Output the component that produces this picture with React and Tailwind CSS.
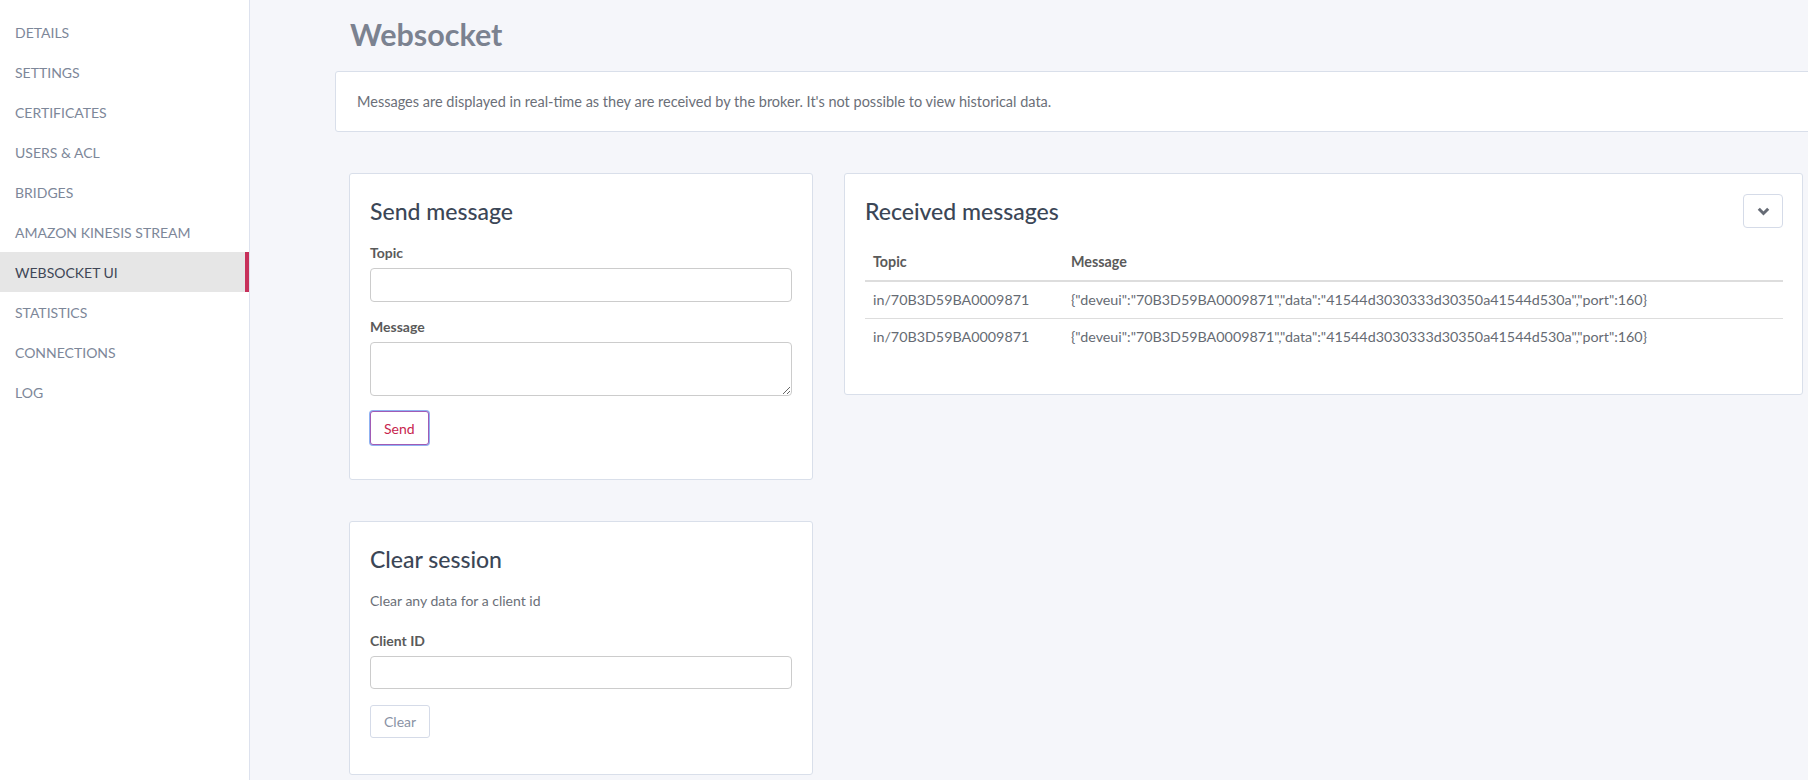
import { useState } from "react";

const NAV = [
  "Details",
  "Settings",
  "Certificates",
  "Users & ACL",
  "Bridges",
  "Amazon Kinesis Stream",
  "Websocket UI",
  "Statistics",
  "Connections",
  "Log",
];

const ROWS = [
  {
    topic: "in/70B3D59BA0009871",
    message: '{"deveui":"70B3D59BA0009871","data":"41544d3030333d30350a41544d530a","port":160}',
  },
  {
    topic: "in/70B3D59BA0009871",
    message: '{"deveui":"70B3D59BA0009871","data":"41544d3030333d30350a41544d530a","port":160}',
  },
];

function Sidebar({ active }) {
  return (
    <aside className="w-[250px] shrink-0 bg-white border-r border-[#dde2ee] pt-[12px]">
      {NAV.map((item) => {
        const isActive = item === active;
        return (
          <div
            key={item}
            className={
              isActive
                ? "h-[40px] flex items-center pl-[15px] uppercase text-[14px] bg-[#e6e6e6] text-[#404756] border-r-4 border-[#c7305a]"
                : "h-[40px] flex items-center pl-[15px] uppercase text-[14px] text-[#7d8799]"
            }
          >
            {item}
          </div>
        );
      })}
    </aside>
  );
}

function Card({ children, className = "" }) {
  return (
    <div className={"bg-white border border-[#d9dfea] rounded-[3px] px-[20px] pt-[24px] " + className}>
      {children}
    </div>
  );
}

function Label({ children }) {
  return <div className="text-[14px] leading-[20px] font-bold text-[#5a5a5a] mb-[5px]">{children}</div>;
}

function SendMessage() {
  const [topic, setTopic] = useState("");
  const [message, setMessage] = useState("");

  return (
    <Card className="pb-[34px]">
      <h3 className="text-[23px] leading-[26px] font-medium text-[#3b4656] mb-[19px]">Send message</h3>
      <Label>Topic</Label>
      <input
        value={topic}
        onChange={(e) => setTopic(e.target.value)}
        className="block w-full h-[34px] border border-[#cccccc] rounded-[4px] px-3 outline-none"
      />
      <div className="mt-[15px]">
        <Label>Message</Label>
        <textarea
          value={message}
          onChange={(e) => setMessage(e.target.value)}
          className="block w-full h-[54px] border border-[#cccccc] rounded-[4px] px-3 py-1 outline-none"
        />
      </div>
      <button className="mt-[15px] h-[34px] px-[13px] text-[14px] text-[#c7254e] bg-white border border-[#a15bb5] rounded-[3px] ring-1 ring-[#8fb2f2]">
        Send
      </button>
    </Card>
  );
}

function ClearSession() {
  const [clientId, setClientId] = useState("");

  return (
    <Card className="pb-[36px]">
      <h3 className="text-[23px] leading-[26px] font-medium text-[#3b4656]">Clear session</h3>
      <p className="mt-[19px] text-[14px] leading-[20px] text-[#6b6f78]">Clear any data for a client id</p>
      <div className="mt-[20px]">
        <Label>Client ID</Label>
        <input
          value={clientId}
          onChange={(e) => setClientId(e.target.value)}
          className="block w-full h-[33px] border border-[#cccccc] rounded-[4px] px-3 outline-none"
        />
      </div>
      <button className="mt-[16px] h-[33px] px-[13px] text-[14px] text-[#8a93a5] bg-white border border-[#d5dbe8] rounded-[3px]">
        Clear
      </button>
    </Card>
  );
}

function ReceivedMessages() {
  return (
    <div className="bg-white border border-[#d9dfea] rounded-[3px] pl-[20px] pr-[19px] pt-[20px] pb-[39px]">
      <div className="flex items-center justify-between mb-[16px]">
        <h3 className="text-[23px] leading-[26px] font-medium text-[#3b4656]">Received messages</h3>
        <button className="w-[40px] h-[34px] flex items-center justify-center bg-white border border-[#d5dbe8] rounded-[4px]">
          <svg width="13" height="9" viewBox="0 0 13 9">
            <polyline points="1.8,1.8 6.5,6.5 11.2,1.8" fill="none" stroke="#666b75" strokeWidth="3" />
          </svg>
        </button>
      </div>
      <table className="w-full text-[14.3px] leading-[20px] text-left">
        <thead>
          <tr className="border-b-2 border-[#dddddd]">
            <th className="w-[198px] px-[8px] py-[8px] font-bold text-[#5a5a5a]">Topic</th>
            <th className="px-[8px] py-[8px] font-bold text-[#5a5a5a]">Message</th>
          </tr>
        </thead>
        <tbody>
          {ROWS.map((row, i) => (
            <tr key={i} className={i < ROWS.length - 1 ? "border-b border-[#dddddd]" : ""}>
              <td className="px-[8px] py-[8px] text-[#666b73]">{row.topic}</td>
              <td className="px-[8px] py-[8px] text-[#666b73]">{row.message}</td>
            </tr>
          ))}
        </tbody>
      </table>
    </div>
  );
}

export default function App() {
  return (
    <div
      className="flex min-h-[780px] bg-[#f5f6fa] overflow-hidden"
      style={{ fontFamily: "Lato, 'Open Sans', sans-serif" }}
    >
      <Sidebar active="Websocket UI" />
      <main className="flex-1 min-w-0 pl-[85px] pt-[14px]">
        <h1 className="ml-[15px] text-[30.5px] leading-[40px] font-bold text-[#7b8290]">Websocket</h1>
        <div className="mt-[17px] w-[calc(100%+20px)] h-[61px] flex items-center pl-[21px] bg-white border border-[#d9dfea] rounded-[3px] text-[14.5px] text-[#6b6f78]">
          Messages are displayed in real-time as they are received by the broker. It's not possible to view historical data.
        </div>
        <div className="mt-[41px] ml-[14px] mr-[5px] flex items-start gap-[31px]">
          <div className="w-[464px] shrink-0 flex flex-col gap-[41px]">
            <SendMessage />
            <ClearSession />
          </div>
          <div className="flex-1 min-w-0">
            <ReceivedMessages />
          </div>
        </div>
      </main>
    </div>
  );
}
